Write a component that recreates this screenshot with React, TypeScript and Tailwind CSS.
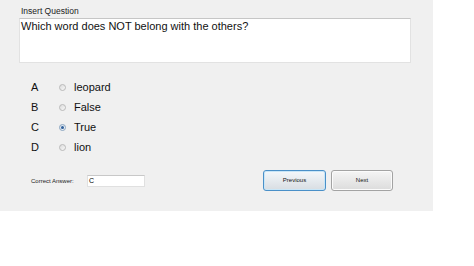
import React from "react";

const options = [
  { letter: "A", text: "leopard", checked: false },
  { letter: "B", text: "False", checked: false },
  { letter: "C", text: "True", checked: true },
  { letter: "D", text: "lion", checked: false },
];

function Radio({ checked }: { checked: boolean }) {
  return (
    <div
      className={
        checked
          ? "w-[7px] h-[7px] rounded-full border border-[#8aa4c0] bg-gradient-to-br from-[#d6e0ea] to-[#f4f7fa] flex items-center justify-center"
          : "w-[7px] h-[7px] rounded-full border border-[#b9b9b9] bg-gradient-to-br from-[#dcdcdc] to-[#f7f7f7] flex items-center justify-center"
      }
    >
      {checked && <div className="w-[3px] h-[3px] rounded-full bg-[#2f5f9a]" />}
    </div>
  );
}

export default function App() {
  return (
    <div className="w-[474px] h-[266px] bg-white" style={{ fontFamily: '"Liberation Sans", Arial, sans-serif' }}>
      <div className="w-[433px] h-[211px] bg-[#f0f0f0] flex flex-col text-black">
        <div className="pl-[21px] pt-[6px] h-[18px] text-[8.5px] leading-[10px] text-[#222]">Insert Question</div>
        <div className="ml-[19px] w-[392px] h-[45px] bg-white border border-[#e2e2e2] border-t-[#c6c6c6] px-[1px] pt-[1px] text-[11px] leading-[13px] text-[#111]">
          Which word does NOT belong with the others?
        </div>
        <div className="mt-[14px] flex flex-col">
          {options.map((o) => (
            <div key={o.letter} className="h-[20px] flex items-center text-[11px] leading-[13px] text-[#111]">
              <div className="pl-[31px] w-[59px]">{o.letter}</div>
              <Radio checked={o.checked} />
              <div className="ml-[8px]">{o.text}</div>
            </div>
          ))}
        </div>
        <div className="mt-[13px] h-[21px] flex items-center">
          <div className="pl-[31px] w-[87px] text-[6px] leading-[8px] text-[#222]">Correct Answer:</div>
          <div className="w-[58px] h-[12px] bg-white border border-[#e0e0e0] border-t-[#c8c8c8] pl-[1px] text-[7px] leading-[10px]">C</div>
          <div className="ml-[118px] w-[63px] h-[21px] rounded-[3px] border border-[#4a90c8] bg-gradient-to-b from-[#f4f8fb] to-[#d8dde2] shadow-[inset_0_0_0_1px_#c9e6f7] flex items-center justify-center text-[6px] text-[#111]">
            Previous
          </div>
          <div className="ml-[5px] w-[62px] h-[21px] rounded-[3px] border border-[#a3a3a3] bg-gradient-to-b from-[#f5f5f5] to-[#dcdcdc] shadow-[inset_0_0_0_1px_#fbfbfb] flex items-center justify-center text-[6px] text-[#111]">
            Next
          </div>
        </div>
      </div>
    </div>
  );
}
